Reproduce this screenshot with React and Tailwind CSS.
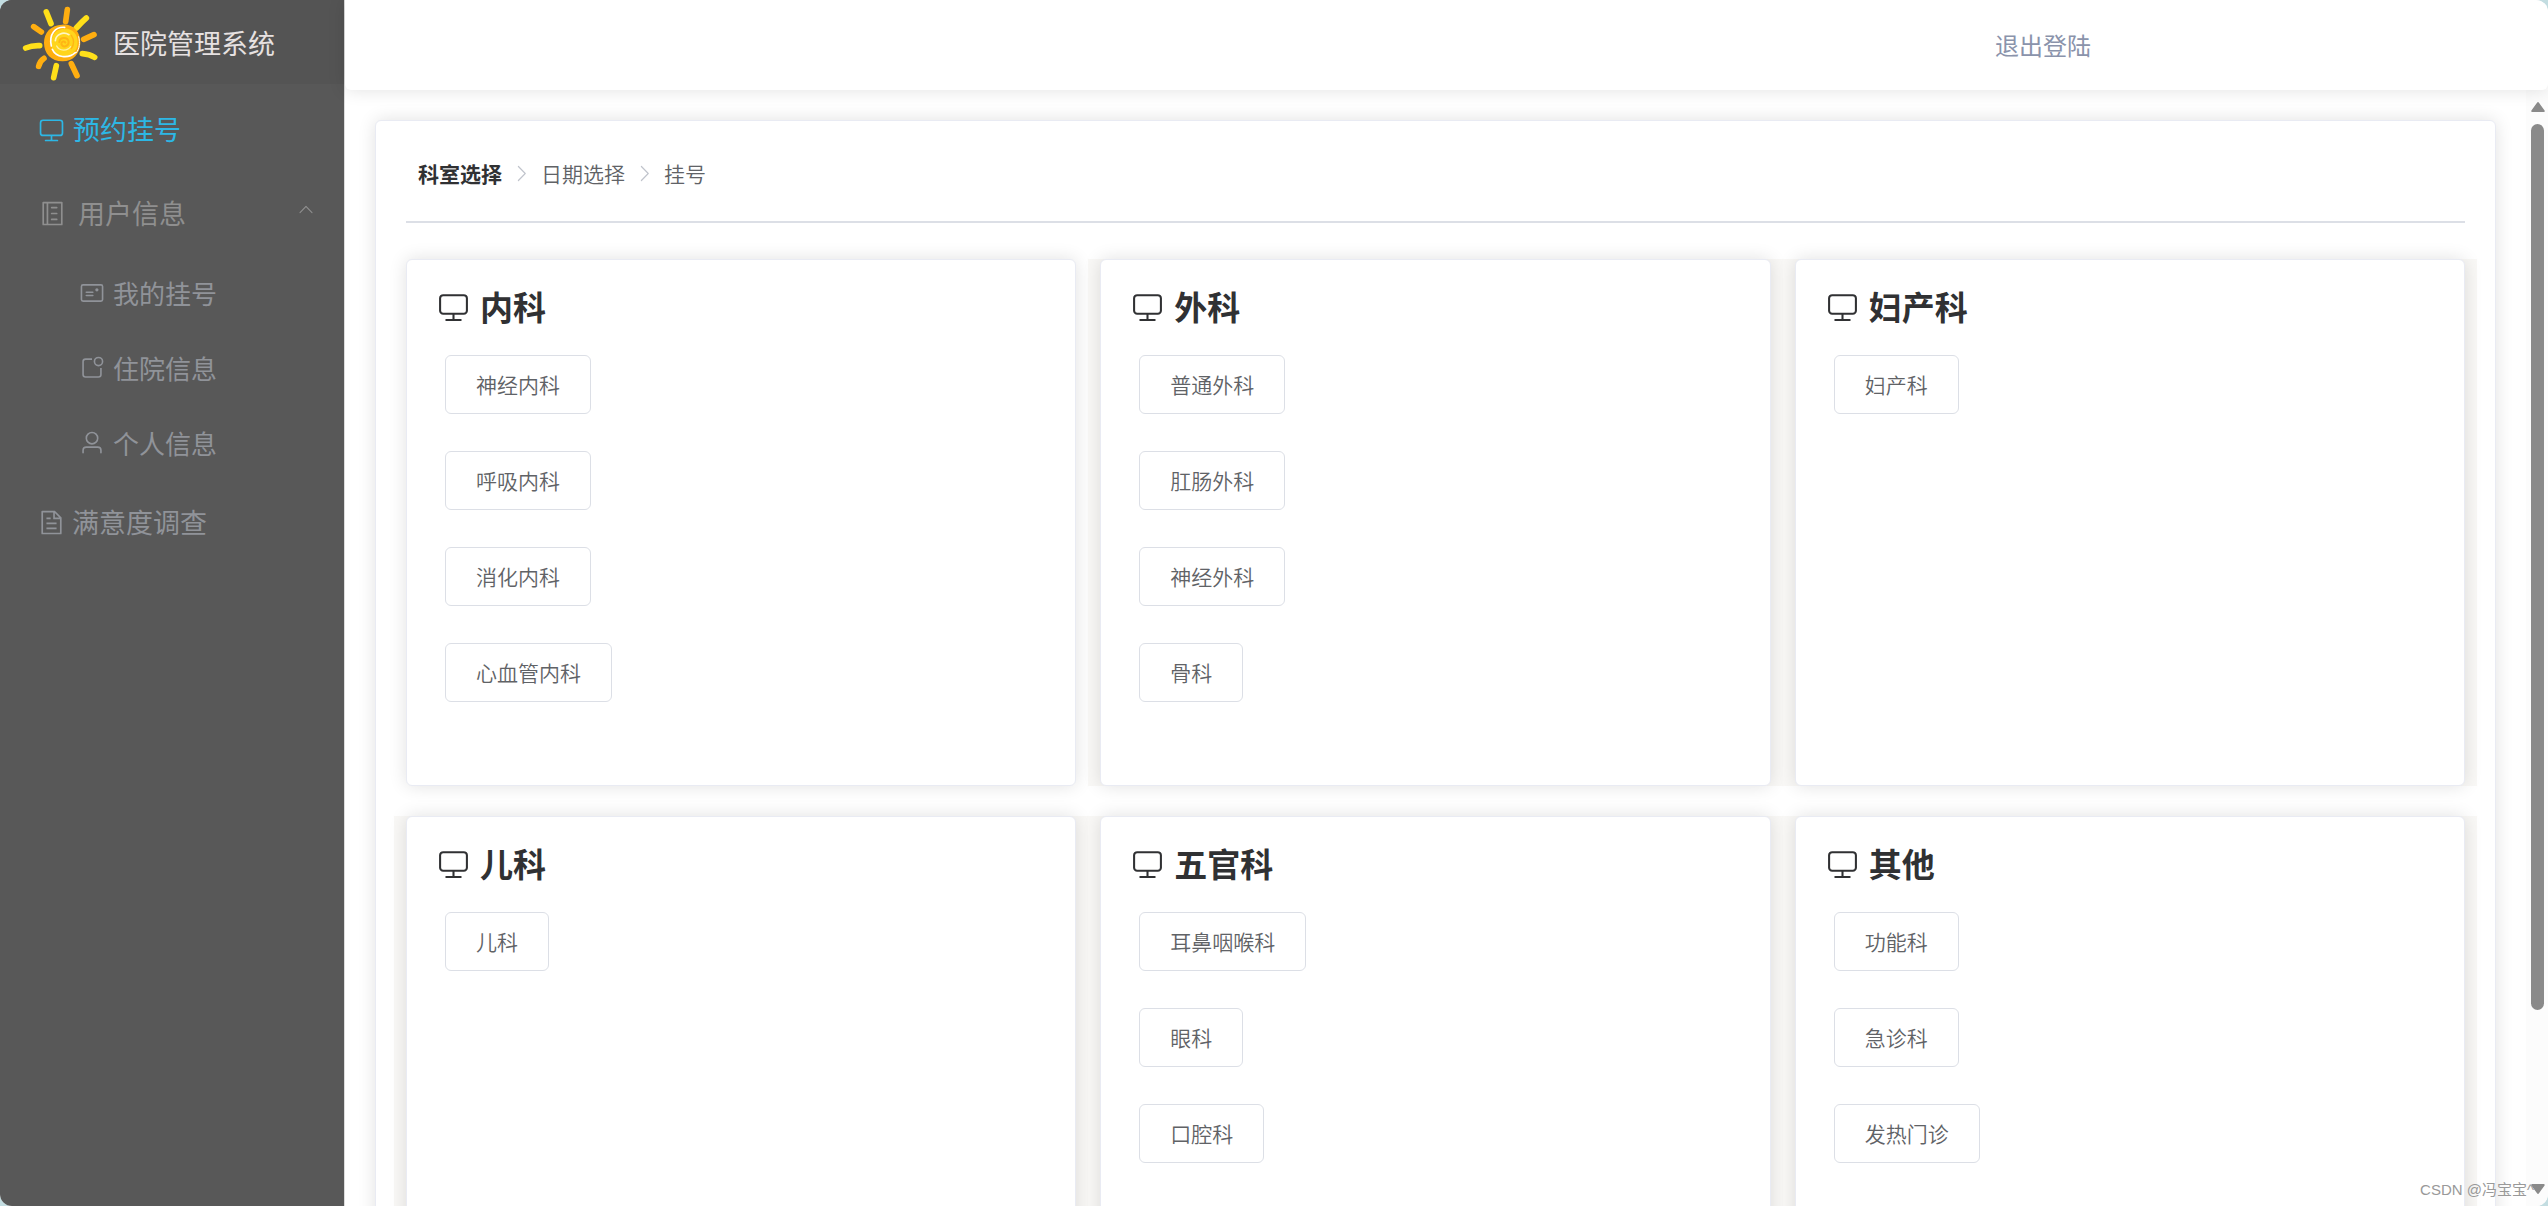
import clsx from "clsx";

// 图标路径，统一 1024 画布
const ICONS = {
  monitor:
    "M544 768v128h192a32 32 0 1 1 0 64H288a32 32 0 1 1 0-64h192V768H192A128 128 0 0 1 64 640V256a128 128 0 0 1 128-128h640a128 128 0 0 1 128 128v384a128 128 0 0 1-128 128H544zM192 192a64 64 0 0 0-64 64v384a64 64 0 0 0 64 64h640a64 64 0 0 0 64-64V256a64 64 0 0 0-64-64H192z",
  memo: "M160 64h704a32 32 0 0 1 32 32v832a32 32 0 0 1-32 32H160a32 32 0 0 1-32-32V96a32 32 0 0 1 32-32zM192 128v768h96V128h-96zM352 128v768h480V128H352zM480 256h192a32 32 0 0 1 0 64H480a32 32 0 0 1 0-64zM480 480h192a32 32 0 0 1 0 64H480a32 32 0 0 1 0-64zM480 704h192a32 32 0 0 1 0 64H480a32 32 0 0 1 0-64z",
  postcard:
    "M160 224a32 32 0 0 0-32 32v512a32 32 0 0 0 32 32h704a32 32 0 0 0 32-32V256a32 32 0 0 0-32-32H160zm0-64h704a96 96 0 0 1 96 96v512a96 96 0 0 1-96 96H160a96 96 0 0 1-96-96V256a96 96 0 0 1 96-96zM704 320a64 64 0 1 1 0 128 64 64 0 0 1 0-128zM288 448h256q32 0 32 32t-32 32H288q-32 0-32-32t32-32zm0 128h256q32 0 32 32t-32 32H288q-32 0-32-32t32-32z",
  notification:
    "M512 128v64H256a64 64 0 0 0-64 64v512a64 64 0 0 0 64 64h512a64 64 0 0 0 64-64V512h64v256a128 128 0 0 1-128 128H256a128 128 0 0 1-128-128V256a128 128 0 0 1 128-128h256zM768 384a128 128 0 1 0 0-256 128 128 0 0 0 0 256zm0 64a192 192 0 1 1 0-384 192 192 0 0 1 0 384z",
  user: "M512 512a192 192 0 1 0 0-384 192 192 0 0 0 0 384zm0 64a256 256 0 1 1 0-512 256 256 0 0 1 0 512zm320 320v-96a96 96 0 0 0-96-96H288a96 96 0 0 0-96 96v96a32 32 0 1 1-64 0v-96a160 160 0 0 1 160-160h448a160 160 0 0 1 160 160v96a32 32 0 1 1-64 0z",
  document:
    "M832 384H576V128H192v768h640V384zm-26.496-64L640 154.496V320h165.504zM160 64h480l256 256v608a32 32 0 0 1-32 32H160a32 32 0 0 1-32-32V96a32 32 0 0 1 32-32zm160 448h384v64H320v-64zm0-192h160v64H320v-64zm0 384h384v64H320v-64z",
  arrowUp:
    "m488.832 344.32-339.84 356.672a32 32 0 0 0 0 44.16l.384.384a29.44 29.44 0 0 0 42.688 0l320-335.872 319.872 335.872a29.44 29.44 0 0 0 42.688 0l.384-.384a32 32 0 0 0 0-44.16L535.168 344.32a32 32 0 0 0-46.336 0z",
  arrowRight:
    "M340.864 149.312a30.592 30.592 0 0 0 0 42.752L652.736 512 340.864 832.384a30.592 30.592 0 0 0 0 42.752 29.12 29.12 0 0 0 41.728 0L714.24 534.336a32 32 0 0 0 0-44.672L382.592 149.376a29.12 29.12 0 0 0-41.728 0z",
};

const DEPARTMENTS = [
  { name: "内科", items: ["神经内科", "呼吸内科", "消化内科", "心血管内科"] },
  { name: "外科", items: ["普通外科", "肛肠外科", "神经外科", "骨科"] },
  { name: "妇产科", items: ["妇产科"] },
  { name: "儿科", items: ["儿科"] },
  { name: "五官科", items: ["耳鼻咽喉科", "眼科", "口腔科"] },
  { name: "其他", items: ["功能科", "急诊科", "发热门诊"] },
];

const USER_MENU = [
  { icon: "postcard", label: "我的挂号" },
  { icon: "notification", label: "住院信息" },
  { icon: "user", label: "个人信息" },
];

const Icon = ({ name, className }) => (
  <svg
    viewBox="0 0 1024 1024"
    fill="currentColor"
    fillRule="evenodd"
    aria-hidden="true"
    className={clsx("shrink-0", className)}
  >
    <path d={ICONS[name]} />
  </svg>
);

const SunLogo = () => (
  <svg viewBox="66 20 228 228" className="size-[76px] shrink-0" fill="none" strokeLinecap="round">
    {/* 光芒 */}
    <g stroke="#ffe01a" strokeWidth="17">
      <path d="M139 38 L153 73" />
      <path d="M259 56 Q246 67 229 86" />
      <path d="M284 174 Q268 164 247 163" />
      <path d="M169 199 L161 235" />
      <path d="M77 146 Q96 138 119 139" />
    </g>
    <g stroke="#ffae10" strokeWidth="17">
      <path d="M202 31 L197 67" />
      <path d="M282 106 L251 120" />
      <path d="M214 193 L231 229" />
      <path d="M132 177 Q120 184 116 201" />
      <path d="M101 82 L124 98" />
    </g>
    {/* 太阳 */}
    <path
      d="M186 76 C220 73 242 98 241 131 C240 164 218 187 187 186 C154 186 132 163 132 131 C132 98 153 78 186 76Z"
      fill="#ffae10"
    />
    <path d="M190 88 C218 86 234 106 233 131 C232 156 214 172 190 171 C166 170 153 152 154 130 C155 106 168 90 190 88Z" fill="#ffd51c" />
    <g stroke="#ffffff" strokeWidth="5">
      <path d="M154 140 C146 104 166 82 194 84" />
      <path d="M157 150 C168 174 204 180 226 160" />
      <path d="M236 112 C241 132 238 148 229 160" strokeWidth="3" />
      <path d="M166 124 C168 104 190 96 207 106" stroke="#fff6c4" />
      <path d="M170 140 C178 156 202 156 212 142" stroke="#fff0a0" strokeWidth="4" />
    </g>
    <g stroke="#ffb514" strokeWidth="6">
      <path d="M178 128 C180 112 204 112 206 128 C206 142 188 146 184 134 C184 126 194 124 196 130" />
      <path d="M214 108 C222 120 222 136 214 148" strokeWidth="4" />
    </g>
  </svg>
);

const Sidebar = () => (
  <aside className="w-[345px] shrink-0 border-r border-[#dcdcdc] bg-[#585858]">
    <div className="flex h-[84px] items-center bg-[#545454] pl-[22px] pt-1">
      <SunLogo />
      <h1 className="pb-[2px] pl-[15px] text-[27px] leading-9 text-[#e6e1e1]">医院管理系统</h1>
    </div>
    <nav className="pt-[3px] text-[27px] leading-9 text-[#909399]">
      <a href="#" className="flex h-[84px] items-center gap-2 pl-[38px] text-[#2db7e5]">
        <Icon name="monitor" className="size-[27px]" />
        预约挂号
      </a>
      <button type="button" className="flex h-[84px] w-full items-center gap-3 pl-[39px] pr-[29px] text-[#8f8f8f]">
        <Icon name="memo" className="size-[27px]" />
        用户信息
        <Icon name="arrowUp" className="mb-2 ml-auto size-[18px]" />
      </button>
      <ul className="text-[26px]">
        {USER_MENU.map((item) => (
          <li key={item.label}>
            <a href="#" className="flex h-[75px] items-center gap-2 pl-[79px]">
              <Icon name={item.icon} className="size-[26px]" />
              {item.label}
            </a>
          </li>
        ))}
      </ul>
      <a href="#" className="flex h-[84px] items-center gap-[7px] pl-[38px]">
        <Icon name="document" className="size-[27px]" />
        满意度调查
      </a>
    </nav>
  </aside>
);

const Breadcrumb = () => (
  <nav className="flex h-12 items-center gap-[9px] pl-3 text-[21px] leading-8 text-[#606266]">
    <a href="#" className="font-bold text-[#303133]">
      科室选择
    </a>
    <Icon name="arrowRight" className="size-[21px] text-[#c0c4cc]" />
    <span className="font-[350]">日期选择</span>
    <Icon name="arrowRight" className="size-[21px] text-[#c0c4cc]" />
    <span className="font-[350]">挂号</span>
  </nav>
);

const DepartmentCard = ({ name, items }) => (
  <section className="min-h-[527px] rounded-md border border-[#e9ebf3] bg-white px-[30px] pt-7 pb-[30px] shadow-[0_0_18px_rgba(0,0,0,0.12)]">
    <h2 className="flex items-center gap-[10px] text-[33px] leading-9 font-bold text-[#303133]">
      <Icon name="monitor" className="size-[33px]" />
      {name}
    </h2>
    <div className="mt-[31px] flex flex-col items-start gap-[37px] pl-2">
      {items.map((item) => (
        <button
          key={item}
          type="button"
          className="h-[59px] rounded-md border border-[#dcdfe6] bg-white px-[30px] text-[21px] font-[350] text-[#606266]"
        >
          {item}
        </button>
      ))}
    </div>
  </section>
);

const Scrollbar = () => (
  <div className="flex w-[22px] shrink-0 flex-col items-center bg-[#fcfcfc] py-3 pl-px">
    <svg viewBox="0 0 14 10" className="h-[10px] w-[14px]" fill="#8a8a8a">
      <path d="M6 .8Q7-.6 8 .8L13.6 8.6Q14 10 12.6 10H1.4Q0 10 .4 8.6Z" />
    </svg>
    <div className="my-3 w-full flex-1">
      <div className="mx-auto h-[84.5%] w-[13px] rounded-full bg-[#8a8a8a]" />
    </div>
    <svg viewBox="0 0 14 10" className="h-[10px] w-[14px]" fill="#8a8a8a">
      <path d="M6 9.2Q7 10.6 8 9.2L13.6 1.4Q14 0 12.6 0H1.4Q0 0 .4 1.4Z" />
    </svg>
  </div>
);

const App = () => {
  return (
    <div className="h-screen bg-[#c3dde1] font-['Noto_Sans_CJK_SC',sans-serif]">
      <div className="relative flex h-full overflow-hidden rounded-xl bg-white">
        <Sidebar />
        <div className="flex min-w-0 flex-1 flex-col">
          <header className="relative z-10 flex h-[90px] shrink-0 items-center justify-end rounded-b-md bg-white pr-[457px] shadow-[0_0_18px_rgba(0,0,0,0.12)]">
            <button type="button" className="text-2xl text-[#8a93ab]">
              退出登陆
            </button>
          </header>

          <div className="flex min-h-0 flex-1">
            <main className="min-w-0 flex-1 overflow-y-auto p-[30px] [scrollbar-width:none]">
              <div className="rounded-md border border-[#e9ebf3] bg-white px-[30px] pt-7 pb-[30px] shadow-[0_0_18px_rgba(0,0,0,0.12)]">
                <Breadcrumb />
                <hr className="mt-6 mb-9 border-t-2 border-[#dcdfe6]" />

                {/* 科室列表：首个栅格没有底色 */}
                <div className="-mx-3 grid grid-cols-3 gap-y-[30px]">
                  {DEPARTMENTS.map((dept, index) => (
                    <div key={dept.name} className={clsx("px-3", index > 0 && "bg-[#f9f8f6]")}>
                      <DepartmentCard {...dept} />
                    </div>
                  ))}
                </div>
              </div>
            </main>
            <Scrollbar />
          </div>
        </div>

        <span className="pointer-events-none absolute right-[14px] bottom-1 z-10 font-['Liberation_Sans','Noto_Sans_CJK_SC',sans-serif] text-[15px] leading-6 text-[#999999]">
          CSDN @冯宝宝^
        </span>
      </div>
    </div>
  );
};

export default App;
